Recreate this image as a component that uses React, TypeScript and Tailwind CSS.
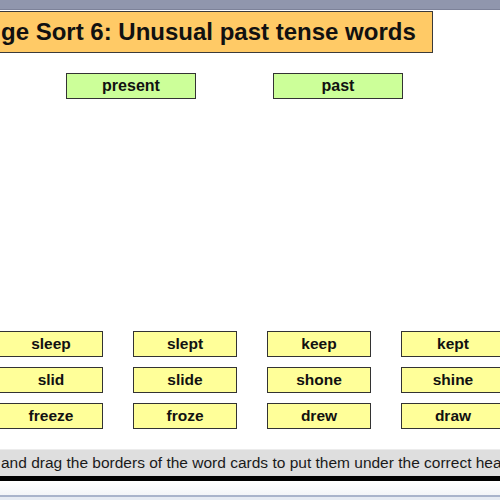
import React from "react";

const words = [
  ["sleep", "slept", "keep", "kept"],
  ["slid", "slide", "shone", "shine"],
  ["freeze", "froze", "drew", "draw"],
];

export default function App() {
  return (
    <div
      className="relative w-[500px] h-[500px] overflow-hidden bg-white flex flex-col"
      style={{ fontFamily: '"Liberation Sans", Arial, sans-serif' }}
    >
      <div className="h-[10px] bg-[#9096ad] border-b border-[#7d8299] shrink-0" />
      <div className="h-px shrink-0" />
      <div className="flex shrink-0">
        <div className="ml-[-8px] w-[441px] h-[42px] bg-[#ffca66] border border-[#3a3a3a] flex items-center pl-[8px] text-[24px] font-bold text-[#111] whitespace-nowrap leading-none">
          ge Sort 6: Unusual past tense words
        </div>
      </div>
      <div className="flex mt-[20px] shrink-0">
        <div className="ml-[66px] w-[130px] h-[26px] bg-[#ccff99] border border-[#333] flex items-center justify-center text-[16px] font-bold text-[#111] leading-none">
          present
        </div>
        <div className="ml-[77px] w-[130px] h-[26px] bg-[#ccff99] border border-[#333] flex items-center justify-center text-[16px] font-bold text-[#111] leading-none">
          past
        </div>
      </div>
      <div className="flex flex-col gap-[10px] mt-[232px] ml-[-1px] shrink-0">
        {words.map((row, i) => (
          <div key={i} className="flex gap-[30px]">
            {row.map((w) => (
              <div
                key={w}
                className="w-[104px] h-[26px] shrink-0 bg-[#ffff99] border border-[#333] flex items-center justify-center text-[15.5px] font-bold text-[#111] leading-none"
              >
                {w}
              </div>
            ))}
          </div>
        ))}
      </div>
      <div className="mt-[20px] h-[27px] bg-[#dedede] border-t border-[#ececec] flex items-center pl-[1px] text-[15.5px] text-[#1a1a1a] whitespace-nowrap shrink-0 leading-none">
        and drag the borders of the word cards to put them under the correct headings.
      </div>
      <div className="h-[5px] bg-black shrink-0" />
      <div className="h-[14px] bg-gradient-to-b from-white to-[#f3f5f8] shrink-0" />
      <div className="h-[2px] bg-[#a9b4cc] shrink-0" />
      <div className="flex-1 bg-[#e6ebf3]" />
    </div>
  );
}
